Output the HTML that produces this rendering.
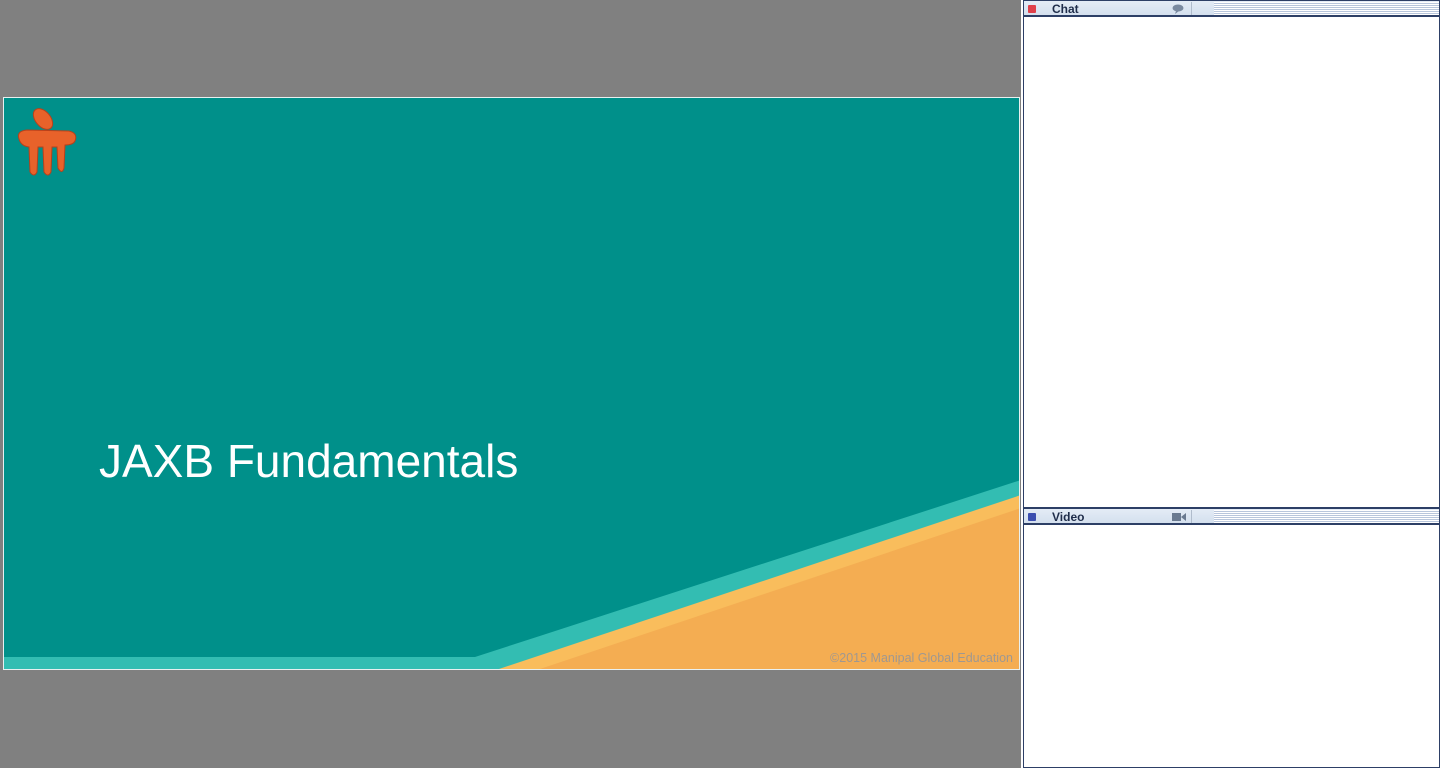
<!DOCTYPE html>
<html><head><meta charset="utf-8"><style>
*{margin:0;padding:0;box-sizing:border-box}
body{width:1440px;height:768px;background:#fff;position:relative;overflow:hidden;font-family:"Liberation Sans",sans-serif}
#left{position:absolute;left:0;top:0;width:1021px;height:768px;background:#808080}
#slide{position:absolute;left:3px;top:97px;width:1017px;height:573px;background:#00908a;border:1px solid #e8f0f0;overflow:hidden}
.title{position:absolute;left:95px;top:340px;line-height:1;color:#fff;font-size:46px}
.copy{position:absolute;right:6px;top:553px;color:#a09890;font-size:12.5px}
.panel{position:absolute;left:1023px;width:417px;border:1px solid #2d3f66;background:#fff}
.hdr{height:16px;border-bottom:2px solid #2d3f66;background:linear-gradient(#e4ecf6,#d4e0ee);position:relative;font-weight:bold;font-size:12px;color:#1f2d4a}
.hdr .sq{position:absolute;left:4px;top:4px;width:8px;height:8px;border-radius:1px}
.hdr .t{position:absolute;left:28px;top:1px}
.hdr .ic{position:absolute;left:148px;top:3px}
.hdr .sep{position:absolute;left:167px;top:1px;width:1px;height:13px;background:#b0bccc}
.hdr .str{position:absolute;left:190px;right:0;top:1px;height:13px;background:repeating-linear-gradient(#fff 0 1px,#b8c6dc 1px 2px)}
</style></head><body>
<div id="left">
<div id="slide">
<svg width="1017" height="573" style="position:absolute;left:0;top:0">
<polygon points="0,559 471,559 1017,382 1017,573 0,573" fill="#33bdb2"/>
<polygon points="489,573 1017,397 1017,573" fill="#f9bd5c"/>
<polygon points="530,573 1017,410 1017,573" fill="#f4ad52"/>
</svg>
<svg width="66" height="74" style="position:absolute;left:9px;top:8px">
<ellipse cx="30" cy="13" rx="7.5" ry="12" transform="rotate(-40 30 13)" fill="#e8622a" stroke="#b8401a" stroke-width="1"/>
<path d="M6,33 Q3,25 14,24 L56,25 Q65,27 62,35 Q60,39 52,39 L51,62 Q49,69 45,62 L44,41 L39,41 L38,66 Q35,72 31,66 L30,41 L25,41 L24,66 Q21,72 17,66 L16,41 Q8,40 6,33Z" fill="#e8622a" stroke="#b8401a" stroke-width="1"/>
</svg>
<div class="title">JAXB Fundamentals</div>
<div class="copy">©2015 Manipal Global Education</div>
</div>
</div>
<div class="panel" style="top:0;height:508px">
<div class="hdr"><div class="sq" style="background:#e0404a"></div><div class="t">Chat</div>
<svg class="ic" width="12" height="10"><ellipse cx="6" cy="4" rx="5.5" ry="3.5" fill="#7a8aa0"/><path d="M4,7 L3,10 L7,7Z" fill="#7a8aa0"/></svg>
<div class="sep"></div><div class="str"></div></div>
</div>
<div class="panel" style="top:508px;height:260px">
<div class="hdr"><div class="sq" style="background:#3c4fb0"></div><div class="t">Video</div>
<svg class="ic" width="14" height="10"><rect x="0" y="1" width="9" height="8" fill="#6a7a90"/><path d="M9,5 L14,1 L14,9Z" fill="#6a7a90"/></svg>
<div class="sep"></div><div class="str"></div></div>
</div>
</body></html>
